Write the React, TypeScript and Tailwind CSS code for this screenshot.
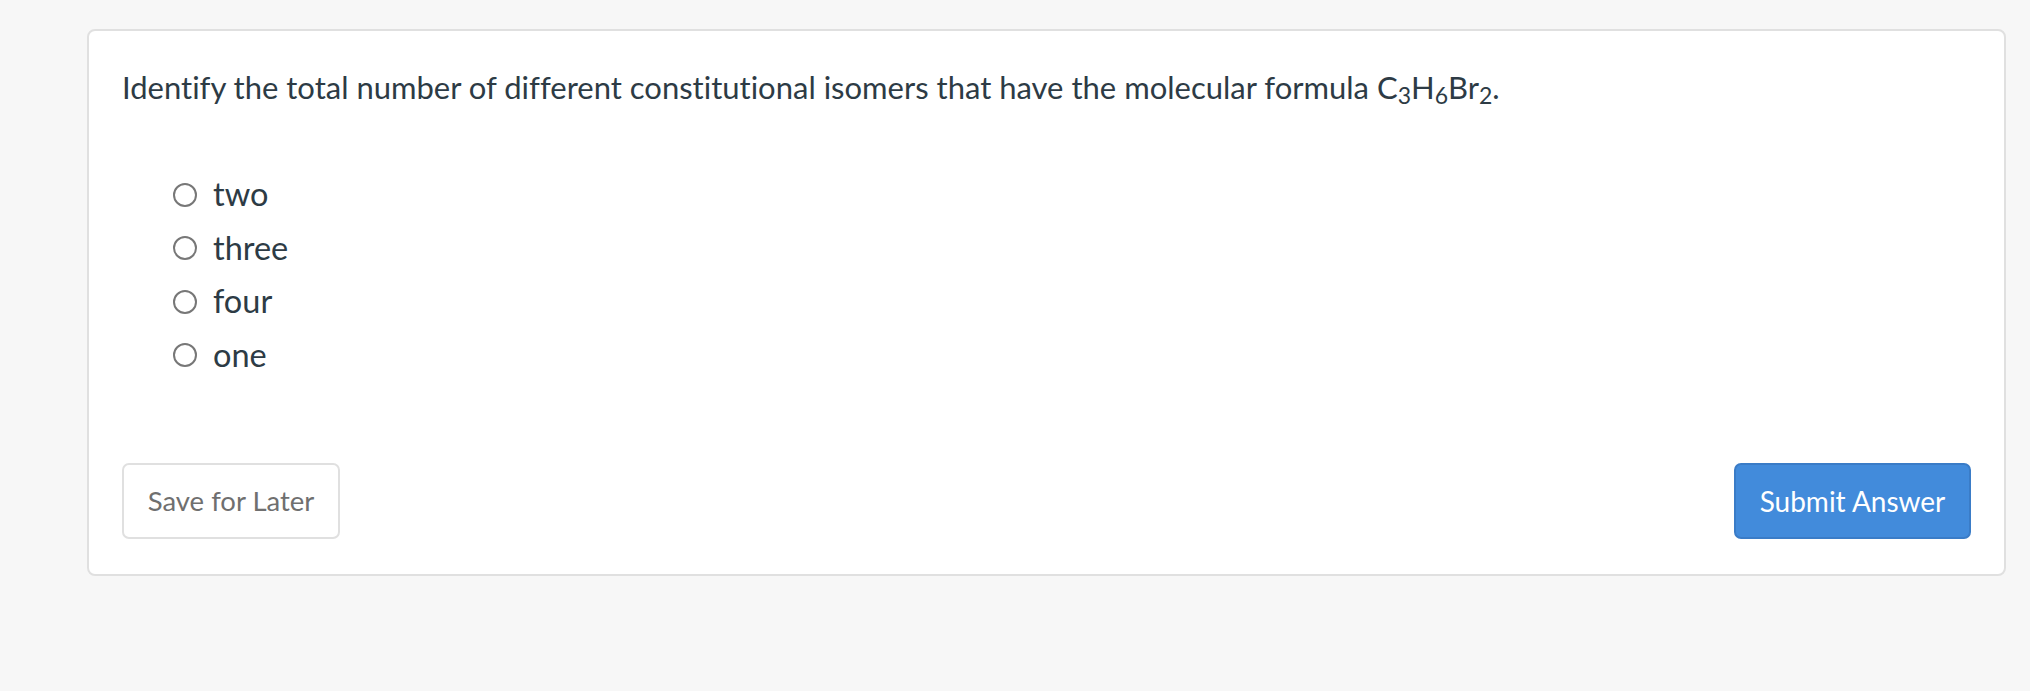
import React from 'react';

const options = ['two', 'three', 'four', 'one'];

function Radio() {
  return (
    <span className="inline-block w-[24px] h-[24px] rounded-full border-2 border-[#777777] bg-white shrink-0" />
  );
}

export default function App() {
  return (
    <div
      className="min-h-screen bg-[#f7f7f7] pt-[29px] pl-[87px] pr-[24px] text-[#2d3b45] [font-variant-ligatures:none]"
      style={{ fontFamily: 'Lato, "Noto Sans", sans-serif' }}
    >
      <div className="bg-white border-2 border-[#e0e0e0] rounded-[8px] pt-[36px] pb-[35px] px-[33px]">
        {/* Question */}
        <p className="text-[31px] leading-[40px]">
          Identify the total number of different constitutional isomers that have the molecular formula C
          <sub className="text-[23px] leading-none relative top-[5px] align-baseline">3</sub>H
          <sub className="text-[23px] leading-none relative top-[5px] align-baseline">6</sub>Br
          <sub className="text-[23px] leading-none relative top-[5px] align-baseline">2</sub>.
        </p>

        {/* Answers */}
        <ul className="mt-[61px] pl-[51px]">
          {options.map((opt) => (
            <li key={opt} className="flex items-center gap-[16px] h-[53.5px] text-[32.5px]">
              <Radio />
              <span>{opt}</span>
            </li>
          ))}
        </ul>

        {/* Actions */}
        <div className="mt-[81px] flex items-center justify-between">
          <button className="h-[76px] w-[218px] rounded-[7px] border-2 border-[#e0e0e0] bg-white text-[27.5px] text-[#6f6f6f]">
            Save for Later
          </button>
          <button className="h-[76px] w-[237px] rounded-[7px] border-2 border-[#3a7cc7] bg-[#428bdb] text-[28px] text-white">
            Submit Answer
          </button>
        </div>
      </div>
    </div>
  );
}
